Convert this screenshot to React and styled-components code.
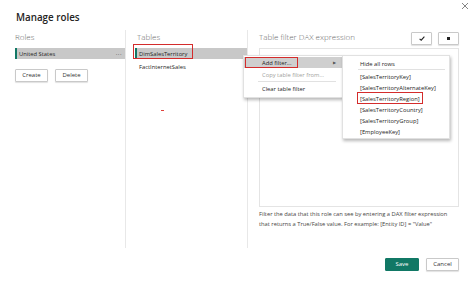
import styled, { createGlobalStyle } from "styled-components";

const GlobalStyle = createGlobalStyle`
  html, body {
    margin: 0;
    padding: 0;
    background: #ffffff;
  }
  body {
    font-family: "Open Sans", "Noto Sans", sans-serif;
    color: #252423;
  }
`;

const Dialog = styled.div`
  position: relative;
  width: 474px;
  height: 284px;
  display: flex;
  flex-direction: column;
  overflow: hidden;
`;

const Header = styled.div`
  display: flex;
  justify-content: space-between;
  align-items: flex-start;
  padding: 2px 5px 0 16px;
  height: 28px;
  box-sizing: border-box;
`;

const Title = styled.h1`
  margin: 9px 0 0;
  font-size: 9.8px;
  font-weight: 600;
  line-height: 13px;
  color: #252423;
`;

const Close = styled.button`
  border: 0;
  background: none;
  padding: 0;
  width: 8px;
  height: 8px;
  display: flex;
  color: #555;
`;

const Body = styled.div`
  display: flex;
  height: 218px;
  margin-top: 2px;
`;

const Column = styled.div`
  display: flex;
  flex-direction: column;
  box-sizing: border-box;
  border-right: ${({ $divider }) => ($divider ? "1px solid #e8e8e8" : "0")};
`;

const RolesCol = styled(Column)`
  width: 111px;
  margin-left: 15px;
`;

const TablesCol = styled(Column)`
  width: 122px;
  padding-left: 9px;
`;

const DaxCol = styled(Column)`
  flex: 1;
  padding: 0 15px 0 11px;
`;

const Label = styled.div`
  font-size: 8px;
  font-weight: 300;
  color: #6b6b6b;
  line-height: 12px;
  height: 12px;
  margin-top: 1px;
  padding-left: ${({ $indent }) => $indent || 0}px;
`;

const List = styled.div`
  display: flex;
  flex-direction: column;
  margin-top: 5px;
`;

const Row = styled.div`
  position: relative;
  display: flex;
  align-items: center;
  justify-content: space-between;
  height: 11px;
  box-sizing: border-box;
  padding: 0 3px 0 ${({ $selected }) => ($selected ? 2 : 4)}px;
  font-size: 5.8px;
  color: #252423;
  background: ${({ $selected }) => ($selected ? "#c8c8c8" : "transparent")};
  border-left: ${({ $selected }) => ($selected ? "2px solid #117865" : "0")};
  margin-bottom: ${({ $gap }) => $gap || 0}px;
`;

const Dots = styled.span`
  font-size: 6px;
  color: #444;
  letter-spacing: 0.5px;
  margin-top: -2px;
`;

const Mark = styled.span`
  position: absolute;
  left: ${({ $l }) => $l}px;
  top: ${({ $t }) => $t}px;
  width: ${({ $w }) => $w}px;
  height: ${({ $h }) => $h}px;
  border: 1.5px solid #d42c2c;
  box-sizing: border-box;
  pointer-events: none;
`;

const ButtonRow = styled.div`
  display: flex;
  gap: 7px;
  margin-top: 10px;
`;

const Button = styled.button`
  height: 13px;
  min-width: ${({ $w }) => $w || 32}px;
  padding: 0 6px;
  font-family: inherit;
  font-size: 6px;
  line-height: 11px;
  color: ${({ $primary }) => ($primary ? "#ffffff" : "#333")};
  background: ${({ $primary }) => ($primary ? "#117865" : "#ffffff")};
  border: 1px solid ${({ $primary }) => ($primary ? "#117865" : "#c9c9c9")};
  border-radius: 1px;
  box-shadow: ${({ $primary }) => ($primary ? "none" : "0 1px 1px rgba(0,0,0,0.12)")};
  box-sizing: border-box;
  display: flex;
  align-items: center;
  justify-content: center;
`;

const DaxHead = styled.div`
  display: flex;
  justify-content: space-between;
  align-items: flex-start;
  height: 18px;
`;

const IconButtons = styled.div`
  display: flex;
  gap: 6px;
  margin-top: 2px;
`;

const IconButton = styled(Button)`
  width: 21px;
  min-width: 21px;
  padding: 0;
`;

const Editor = styled.div`
  height: 159px;
  border: 1px solid #e4e4e4;
  box-sizing: border-box;
`;

const Help = styled.p`
  margin: 3px 0 0;
  font-size: 5.75px;
  line-height: 9.5px;
  color: #484644;
`;

const Footer = styled.div`
  display: flex;
  justify-content: flex-end;
  gap: 7px;
  padding: 10px 15px 0 0;
`;

const Menu = styled.div`
  position: absolute;
  left: ${({ $x }) => $x}px;
  top: ${({ $y }) => $y}px;
  width: ${({ $w }) => $w}px;
  background: #ffffff;
  border: 1px solid #e1e1e1;
  box-shadow: 1px 2px 3px rgba(0, 0, 0, 0.28);
  box-sizing: border-box;
  padding: ${({ $pad }) => $pad || "1px 0"};
`;

const MenuItem = styled.div`
  position: relative;
  display: flex;
  align-items: center;
  justify-content: space-between;
  height: ${({ $h }) => $h || 11}px;
  padding: 0 6px 0 ${({ $indent }) => $indent || 18}px;
  font-size: 5.8px;
  color: ${({ $disabled }) => ($disabled ? "#a19f9d" : "#252423")};
  background: ${({ $active }) => ($active ? "#cfcfcf" : "transparent")};
  white-space: nowrap;
`;

const Separator = styled.div`
  height: 1px;
  background: #e1e1e1;
  margin: ${({ $m }) => $m || "2px 6px 2px 14px"};
`;

const Arrow = styled.span`
  font-size: 4px;
  color: #555;
`;

const Cursor = styled.span`
  position: absolute;
  left: 161px;
  top: 110px;
  width: 3px;
  height: 1px;
  background: #e0403a;
`;

const fields = [
  "[SalesTerritoryKey]",
  "[SalesTerritoryAlternateKey]",
  "[SalesTerritoryRegion]",
  "[SalesTerritoryCountry]",
  "[SalesTerritoryGroup]",
  "[EmployeeKey]",
];

export default function App() {
  return (
    <Dialog>
      <GlobalStyle />
      <Header>
        <Title>Manage roles</Title>
        <Close aria-label="Close">
          <svg width="8" height="8" viewBox="0 0 8 8">
            <path d="M1 1 L7 7 M7 1 L1 7" stroke="#666" strokeWidth="0.8" />
          </svg>
        </Close>
      </Header>

      <Body>
        <RolesCol $divider>
          <Label>Roles</Label>
          <List>
            <Row $selected>
              <span>United States</span>
              <Dots>...</Dots>
            </Row>
          </List>
          <ButtonRow>
            <Button $w={33}>Create</Button>
            <Button $w={33}>Delete</Button>
          </ButtonRow>
        </RolesCol>

        <TablesCol $divider>
          <Label $indent={2}>Tables</Label>
          <List>
            <Row $selected $gap={2}>
              <span>DimSalesTerritory</span>
              <Mark $l={-4} $t={-4} $w={60} $h={15} />
            </Row>
            <Row>
              <span>FactInternetSales</span>
            </Row>
          </List>
        </TablesCol>

        <DaxCol>
          <DaxHead>
            <Label>Table filter DAX expression</Label>
            <IconButtons>
              <IconButton aria-label="Apply">
                <svg width="6" height="5" viewBox="0 0 6 5">
                  <path d="M0.6 2.8 L2.2 4.2 L5.4 0.6" fill="none" stroke="#222" strokeWidth="1.1" />
                </svg>
              </IconButton>
              <IconButton aria-label="Discard">
                <svg width="3" height="3" viewBox="0 0 3 3">
                  <rect width="3" height="3" fill="#222" />
                </svg>
              </IconButton>
            </IconButtons>
          </DaxHead>
          <Editor />
          <Help>
            Filter the data that this role can see by entering a DAX filter expression
            <br />
            that returns a True/False value. For example: [Entity ID] = "Value"
          </Help>
        </DaxCol>
      </Body>

      <Footer>
        <Button $primary $w={34}>Save</Button>
        <Button $w={33}>Cancel</Button>
      </Footer>

      <Menu $x={243} $y={55} $w={100} $pad="1px 0 2px">
        <MenuItem $active>
          <span>Add filter...</span>
          <Arrow>▶</Arrow>
          <Mark $l={1} $t={0} $w={53} $h={11} />
        </MenuItem>
        <MenuItem $disabled $h={13}>Copy table filter from...</MenuItem>
        <Separator $m="0 6px 0 14px" />
        <MenuItem $h={13}>Clear table filter</MenuItem>
      </Menu>

      <Menu $x={342} $y={55} $w={108} $pad="2px 0 1px">
        <MenuItem $indent={17} $h={11}>Hide all rows</MenuItem>
        <Separator $m="0 4px 1px 15px" />
        {fields.map((f) => (
          <MenuItem key={f} $indent={17} $h={11}>
            {f}
            {f === "[SalesTerritoryRegion]" && <Mark $l={14} $t={-1} $w={66} $h={12} />}
          </MenuItem>
        ))}
      </Menu>

      <Cursor />
    </Dialog>
  );
}
